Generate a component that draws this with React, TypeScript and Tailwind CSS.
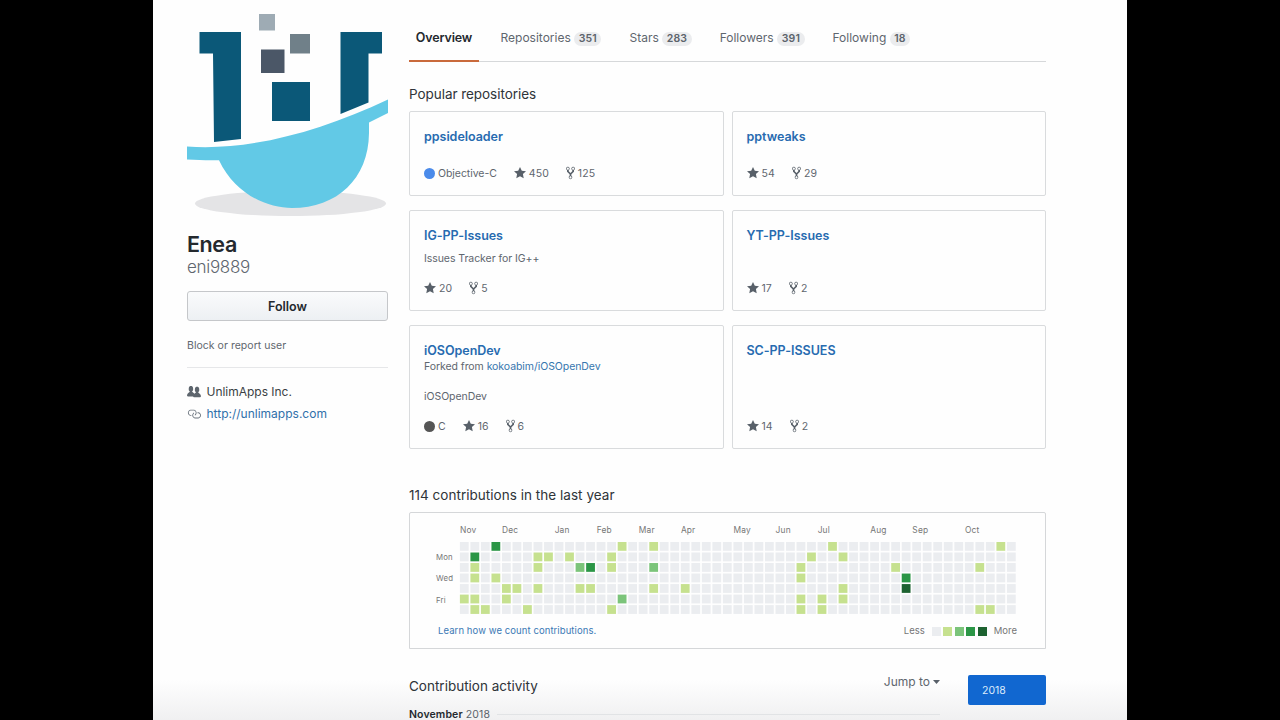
import type { ReactNode } from "react";

function StarIcon() {
  return (
    <svg viewBox="0 0 14 16" className="h-[14px] w-[12px] shrink-0 fill-[#586069]">
      <path d="M14 6l-4.9-.64L7 1 4.9 5.36 0 6l3.6 3.26L2.67 14 7 11.67 11.33 14l-.93-4.74z" />
    </svg>
  );
}

function ForkIcon() {
  return (
    <svg viewBox="0 0 10 16" className="h-[14px] w-[9px] shrink-0 fill-[#586069]">
      <path d="M8 1a1.993 1.993 0 0 0-1 3.72V6L5 8 3 6V4.72A1.993 1.993 0 0 0 2 1a1.993 1.993 0 0 0-1 3.72V6.5l3 3v1.78A1.993 1.993 0 0 0 5 15a1.993 1.993 0 0 0 1-3.72V9.5l3-3V4.72A1.993 1.993 0 0 0 8 1zM2 4.2C1.34 4.2.8 3.65.8 3c0-.65.55-1.2 1.2-1.2.65 0 1.2.55 1.2 1.2 0 .65-.55 1.2-1.2 1.2zm3 10c-.66 0-1.2-.55-1.2-1.2 0-.65.55-1.2 1.2-1.2.65 0 1.2.55 1.2 1.2 0 .65-.55 1.2-1.2 1.2zm3-10c-.66 0-1.2-.55-1.2-1.2 0-.65.55-1.2 1.2-1.2.65 0 1.2.55 1.2 1.2 0 .65-.55 1.2-1.2 1.2z" />
    </svg>
  );
}

function OrganizationIcon() {
  return (
    <svg viewBox="0 0 16 16" className="h-[14px] w-[14px] shrink-0 fill-[#5d656d]">
      <path d="M16 12.999c0 .439-.45 1-1 1H7.995c-.539 0-.994-.447-.995-.999H1c-.54 0-1-.561-1-1 0-2.634 3-4 3-4s.229-.409 0-1c-.841-.621-1.058-.59-1-3 .058-2.419 1.367-3 2.5-3s2.442.58 2.5 3c.058 2.41-.159 2.379-1 3-.229.59 0 1 0 1s1.549.711 2.42 2.088C9.196 9.369 10 8.999 10 8.999s.229-.409 0-1c-.841-.62-1.058-.59-1-3 .058-2.419 1.367-3 2.5-3s2.437.581 2.495 3c.059 2.41-.158 2.38-1 3-.229.59 0 1 0 1s3.005 1.366 3.005 4" />
    </svg>
  );
}

function LinkIcon() {
  return (
    <svg viewBox="0 0 16 16" className="h-[14px] w-[14px] shrink-0 fill-[#6a737d]">
      <path d="M4 9h1v1H4c-1.5 0-3-1.69-3-3.5S2.55 3 4 3h4c1.45 0 3 1.69 3 3.5 0 1.41-.91 2.72-2 3.25V8.59c.58-.45 1-1.27 1-2.09C10 5.22 8.98 4 8 4H4c-.98 0-2 1.22-2 2.5S3 9 4 9zm9-3h-1v1h1c1 0 2 1.22 2 2.5S13.98 12 13 12H9c-.98 0-2-1.22-2-2.5 0-.83.42-1.64 1-2.09V6.25c-1.09.53-2 1.84-2 3.25C6 11.31 7.55 13 9 13h4c1.45 0 3-1.69 3-3.5S14.5 6 13 6z" />
    </svg>
  );
}

function Avatar() {
  return (
    <svg viewBox="0 0 201 202" className="block h-[202px] w-[201px] bg-[#fefefe]">
      <ellipse cx="103.5" cy="189.5" rx="95.5" ry="12.5" fill="#e4e4e6" />
      <path d="M0 132.5C62 137 132 118 201 85.5V99L182 108.500V119C181.500 165 150 194 105 194C80 194 48 180 32 146.200C22 146.500 12 146.200 0 145.500Z" fill="#62c9e6" />
      <path d="M12.500 18H54V125L27 128L26 39.500H12.500Z" fill="#0b5878" />
      <path d="M153.500 18H195V39.500H181.500V88.500L153.500 100Z" fill="#0b5878" />
      <rect x="85" y="68" width="38" height="39" fill="#0b5878" />
      <rect x="74" y="35.500" width="23.500" height="23.500" fill="#4b5767" />
      <rect x="103" y="20" width="20" height="19.500" fill="#708089" />
      <rect x="72" y="0" width="16" height="16.500" fill="#9eabb4" />
    </svg>
  );
}

function Tab({ label, count, className }: { label: string; count: string; className: string }) {
  return (
    <div className={`flex items-center ${className}`}>
      <span className="pb-[2px] text-[12px] text-[#5f666e]">{label}</span>
      <span className="ml-[3.5px] flex h-[14px] items-center rounded-full bg-[#ebecee] px-[4.5px] text-[10.5px] font-semibold tracking-[0.15px] text-[#5c636b]">
        {count}
      </span>
    </div>
  );
}

type Repo = {
  name: string;
  stars: string;
  forks: string;
  language?: string;
  dot?: string;
  source?: string;
  description?: string;
};

const repos: Repo[] = [
  { name: "ppsideloader", stars: "450", forks: "125", language: "Objective-C", dot: "bg-[#4b8bea]" },
  { name: "pptweaks", stars: "54", forks: "29" },
  { name: "IG-PP-Issues", stars: "20", forks: "5", description: "Issues Tracker for IG++" },
  { name: "YT-PP-Issues", stars: "17", forks: "2" },
  { name: "iOSOpenDev", stars: "16", forks: "6", language: "C", dot: "bg-[#555555]", source: "kokoabim/iOSOpenDev", description: "iOSOpenDev" },
  { name: "SC-PP-ISSUES", stars: "14", forks: "2" },
];

function Stat({ icon, value }: { icon: ReactNode; value: string }) {
  return (
    <span className="flex items-center gap-[3px]">
      {icon}
      <span className="pt-[2px] tracking-[0.1px]">{value}</span>
    </span>
  );
}

function RepoCard({ repo }: { repo: Repo }) {
  return (
    <article className="flex flex-col rounded-[2px] border border-[#d9dbdd] px-[14px] pt-[16px] pb-[14px] text-[10.5px] tracking-[-0.06px] text-[#5f666e]">
      <a className="block h-[18px] text-[12.5px] leading-[18px] font-semibold tracking-[-0.03px] text-[#276bb0]">{repo.name}</a>
      {repo.source && (
        <p className="h-[14px] leading-[14px]">
          Forked from <a className="text-[#3676ae]">{repo.source}</a>
        </p>
      )}
      {repo.description && (
        <p className={repo.source ? "mt-[16px] leading-[14px]" : "mt-[7px] leading-[14px]"}>{repo.description}</p>
      )}
      <div className="mt-auto flex h-[16px] items-center gap-[17px]">
        {repo.language && (
          <span className="flex items-center gap-[3px]">
            <span className={`h-[11px] w-[11px] rounded-full ${repo.dot}`} />
            <span className="pt-[2px]">{repo.language}</span>
          </span>
        )}
        <Stat icon={<StarIcon />} value={repo.stars} />
        <Stat icon={<ForkIcon />} value={repo.forks} />
      </div>
    </article>
  );
}

const palette = ["#ebedf0", "#c6e18f", "#7bc47a", "#2b9646", "#1d6230"];

// One entry per weekday, Sunday first: [week, level].
const activity: [number, number][][] = [
  [[3, 3], [15, 1], [18, 1], [35, 1], [51, 1]],
  [[1, 3], [7, 1], [8, 1], [10, 1], [14, 1], [33, 1], [36, 1]],
  [[1, 1], [7, 1], [11, 2], [12, 3], [14, 1], [18, 2], [32, 1], [41, 1], [49, 1]],
  [[1, 1], [3, 1], [32, 1], [42, 3]],
  [[4, 1], [5, 1], [7, 1], [11, 1], [12, 1], [18, 1], [21, 1], [36, 1], [42, 4]],
  [[0, 1], [1, 1], [4, 1], [15, 2], [32, 1], [34, 1], [36, 1]],
  [[1, 1], [2, 1], [6, 1], [14, 1], [32, 1], [34, 1], [49, 1], [50, 1]],
];

const months: [string, number][] = [
  ["Nov", 0], ["Dec", 4], ["Jan", 9], ["Feb", 13], ["Mar", 17], ["Apr", 21],
  ["May", 26], ["Jun", 30], ["Jul", 34], ["Aug", 39], ["Sep", 43], ["Oct", 48],
];

const weeks = Array.from({ length: 53 }, (_, i) => i);
const PITCH = 10.52;

function Calendar() {
  return (
    <svg viewBox="0 0 635 106" className="block h-[106px] w-[635px]" fontFamily="Inter, sans-serif">
      <g fontSize="8.4" fill="#767676" letterSpacing="0.15">
        {months.map(([name, week]) => (
          <text key={name} x={50 + week * PITCH} y="20">{name}</text>
        ))}
      </g>
      <g fontSize="7.8" fill="#767676" letterSpacing="0.15">
        <text x="26" y="46.500">Mon</text>
        <text x="26" y="67.800">Wed</text>
        <text x="26" y="89.500">Fri</text>
      </g>
      {activity.map((days, row) =>
        weeks.map((week) => {
          const level = days.find(([w]) => w === week)?.[1] ?? 0;
          return (
            <rect key={`${row}-${week}`} x={49.9 + week * PITCH} y={29 + row * PITCH} width="8.8" height="8.8" fill={palette[level]} />
          );
        })
      )}
    </svg>
  );
}

export default function App() {
  return (
    <div className="flex h-[720px] w-[1280px] justify-center overflow-hidden bg-black font-['Inter',sans-serif] whitespace-nowrap">
      <div className="flex h-[720px] w-[974px] bg-[linear-gradient(to_bottom,#fefefe_0,#fefefe_680px,#f0f0f1_720px)] pl-[34px]">
        <aside className="w-[201px] shrink-0 pt-[14px]">
          <Avatar />
          <h1 className="mt-[15px] h-[26px] text-[21.5px] leading-[26px] font-semibold tracking-[-0.4px] text-[#24292e]">Enea</h1>
          <p className="h-[20px] text-[17px] leading-[20px] font-light tracking-[-0.3px] text-[#5f666e]">eni9889</p>
          <button className="mt-[14px] flex h-[30px] w-full items-center justify-center rounded-[3px] border border-[#c5c7ca] bg-linear-to-b from-[#fafbfc] to-[#edf0f3] pt-[2px] text-[12.5px] font-semibold text-[#24292e]">
            Follow
          </button>
          <p className="mt-[18px] h-[14px] text-[10.5px] leading-[14px] tracking-[0.03px] text-[#5f666e]">Block or report user</p>
          <hr className="mt-[14px] border-[#e6e7e9]" />
          <div className="mt-[15px] flex h-[18px] items-center gap-[5.5px] text-[12px] tracking-[-0.02px] text-[#3a3f44]">
            <OrganizationIcon />
            <span className="pb-px">UnlimApps Inc.</span>
          </div>
          <div className="mt-[4px] flex h-[18px] items-center gap-[5.5px] text-[12px]">
            <LinkIcon />
            <a className="pb-px text-[#3070aa]">http://unlimapps.com</a>
          </div>
        </aside>

        <main className="ml-[21px] w-[637px] shrink-0">
          <nav className="flex h-[62px] items-stretch border-b border-[#d6d8da] pt-[16px]">
            <div className="-mb-px flex w-[70px] items-center justify-center border-b-2 border-[#c96a3c] text-[12.5px] font-semibold tracking-[-0.15px] text-[#24292e]">
              Overview
            </div>
            <Tab label="Repositories" count="351" className="ml-[21.5px]" />
            <Tab label="Stars" count="283" className="ml-[28px]" />
            <Tab label="Followers" count="391" className="ml-[28px]" />
            <Tab label="Following" count="18" className="ml-[28px]" />
          </nav>

          <h2 className="mt-[22px] h-[20px] text-[13.5px] leading-[20px] tracking-[-0.05px] text-[#2f3439]">Popular repositories</h2>
          <div className="mt-[7px] grid grid-cols-2 grid-rows-[85px_101px_124px] gap-x-[8px] gap-y-[14px]">
            {repos.map((repo) => (
              <RepoCard key={repo.name} repo={repo} />
            ))}
          </div>

          <h2 className="mt-[36px] h-[20px] text-[13.5px] leading-[20px] tracking-[0.03px] text-[#2f3439]">114 contributions in the last year</h2>
          <section className="mt-[7px] h-[137px] rounded-t-[2px] border border-[#d5d7d9]">
            <Calendar />
            <div className="mt-[4px] flex h-[16px] items-center pr-[28px] pl-[28px] text-[9.5px] text-[#767676]">
              <a className="tracking-[0.08px] text-[#3a79b5]">Learn how we count contributions.</a>
              <span className="ml-auto">Less</span>
              <span className="mx-[7px] flex gap-[2.5px]">
                <span className="h-[9px] w-[9px] bg-[#ebedf0]" />
                <span className="h-[9px] w-[9px] bg-[#c6e18f]" />
                <span className="h-[9px] w-[9px] bg-[#7bc47a]" />
                <span className="h-[9px] w-[9px] bg-[#2b9646]" />
                <span className="h-[9px] w-[9px] bg-[#1d6230]" />
              </span>
              <span>More</span>
            </div>
          </section>

          <div className="mt-[26px] flex items-start">
            <div className="w-[531px]">
              <div className="flex h-[22px] items-center justify-between">
                <h2 className="text-[13.5px] leading-[20px] text-[#2f3439]">Contribution activity</h2>
                <span className="-mt-[8px] flex items-center gap-[3px] text-[12px] text-[#5f666e]">
                  Jump to
                  <svg viewBox="0 0 7 4" className="h-[4px] w-[7px] fill-[#586069]"><path d="M0 0H7L3.500 4Z" /></svg>
                </span>
              </div>
              <div className="mt-[9px] flex h-[16px] items-center text-[10.5px] tracking-[0.12px] text-[#5c636b]">
                <span className="pt-[2px]"><b className="font-semibold text-[#24292e]">November</b> 2018</span>
                <span className="ml-[7px] h-px flex-1 bg-[#e1e3e5]" />
              </div>
            </div>
            <div className="ml-auto flex h-[30px] w-[78px] items-center rounded-[2px] bg-[#1167d0] pt-px pl-[14px] text-[10.5px] text-[#dcebfb]">
              2018
            </div>
          </div>
        </main>
      </div>
    </div>
  );
}
